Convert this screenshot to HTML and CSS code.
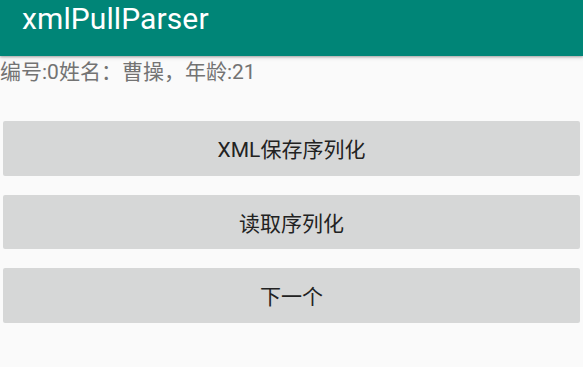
FILE: index.html
```html
<!DOCTYPE html>
<html lang="zh-CN">
<head>
<meta charset="utf-8">
<title>xmlPullParser</title>
<link rel="stylesheet" href="styles.css">
</head>
<body>
<header class="appbar">
  <h1 class="title">xmlPullParser</h1>
</header>
<main class="content">
  <p class="info">编号:0姓名<span class="punct">：</span>曹操<span class="punct">，</span>年龄:21</p>
  <div class="buttons">
    <button class="btn" type="button">XML保存序列化</button>
    <button class="btn" type="button">读取序列化</button>
    <button class="btn" type="button">下一个</button>
  </div>
</main>
</body>
</html>
```

FILE: styles.css
```css
html, body {
  margin: 0;
  padding: 0;
}

body {
  width: 583px;
  height: 367px;
  overflow: hidden;
  background: #fafafa;
  font-family: Roboto, "Noto Sans CJK SC", sans-serif;
}

.appbar {
  position: relative;
  z-index: 1;
  height: 56px;
  background: #008577;
  box-shadow: 0 1px 2px rgba(0, 0, 0, 0.25), 0 2px 4px rgba(0, 0, 0, 0.12);
  display: flex;
  align-items: flex-start;
  padding-left: 22px;
}

.title {
  margin: 0;
  font-weight: 400;
  font-size: 30px;
  line-height: 30px;
  color: #ffffff;
  padding-top: 4px;
  letter-spacing: 0.1px;
}

.content {
  display: flex;
  flex-direction: column;
}

.info {
  margin: 2px 0 0 0;
  height: 24px;
  font-size: 21px;
  line-height: 24px;
  color: #737373;
  white-space: nowrap;
}

.punct {
  font-family: "Noto Sans CJK TC", sans-serif;
}

.buttons {
  display: flex;
  flex-direction: column;
  gap: 19px;
  padding: 39px 3px 0 3px;
}

.btn {
  height: 54.5px;
  border: none;
  border-radius: 2px;
  background: #d6d7d7;
  color: #222222;
  font-family: Roboto, "Noto Sans CJK SC", sans-serif;
  font-size: 21px;
  padding: 0;
  margin: 0;
}
```
